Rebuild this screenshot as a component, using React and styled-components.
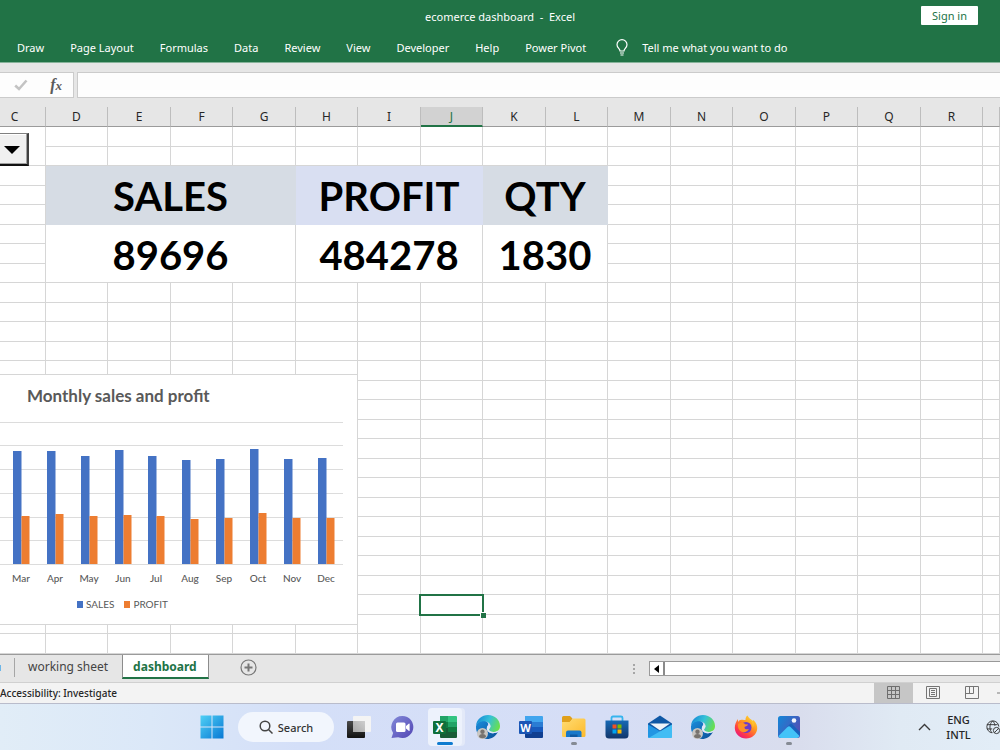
import React from "react";
import styled, { createGlobalStyle, css } from "styled-components";

const GlobalStyle = createGlobalStyle`
  *, *::before, *::after {
    box-sizing: border-box;
  }
  body {
    margin: 0;
    overflow-x: hidden;
    background: #e6e6e6;
    font-family: "Noto Sans", "Open Sans", sans-serif;
    font-size: 11px;
    color: #262626;
  }
  button, input, select {
    margin: 0;
    padding: 0;
    border: 0;
    background: none;
    color: inherit;
    font: inherit;
  }
`;

const Page = styled.div`
  display: flex;
  flex-direction: column;
  min-height: 100vh;
  overflow: hidden;
`;

/* ---------- title bar and ribbon ---------- */

const Header = styled.header`
  background: #217346;
  border-bottom: 1px solid #86b39a;
  color: #fff;
`;

const TitleBar = styled.div`
  display: grid;
  grid-template-columns: 1fr auto 1fr;
  align-items: center;
  height: 34px;
  padding: 0 22px 2px;
`;

const Title = styled.h1`
  grid-column: 2;
  margin: 0;
  font-size: 11px;
  font-weight: 400;
  white-space: pre;
`;

const SignIn = styled.button`
  justify-self: end;
  align-self: start;
  width: 57px;
  height: 19px;
  margin-top: 6px;
  border-radius: 1px;
  background: #fff;
  color: #217346;
  line-height: 19px;
`;

const Ribbon = styled.nav`
  display: flex;
  align-items: center;
  gap: 26px;
  height: 28px;
  padding: 0 0 2px 17px;
  white-space: nowrap;
`;

const TellMe = styled.button`
  display: flex;
  align-items: center;
  gap: 14px;
  margin-left: 4px;
`;

/* ---------- formula bar ---------- */

const FormulaBar = styled.div`
  display: flex;
  gap: 3px;
  padding: 9px 0;
  background: #e6e6e6;
`;

const FormulaTools = styled.div`
  display: flex;
  align-items: center;
  justify-content: flex-end;
  gap: 22px;
  width: 74px;
  height: 26px;
  padding-right: 11px;
  border: 1px solid #cbcbcb;
  border-left: 0;
  background: #fdfdfd;
`;

const ToolButton = styled.button`
  display: flex;
`;

const Fx = styled.button`
  color: #5a5a5a;
  font-family: "Liberation Serif", serif;
  font-size: 16px;
  font-style: italic;
  font-weight: 700;
  line-height: 20px;

  span {
    font-size: 13px;
  }
`;

const FormulaInput = styled.input`
  flex: 1;
  min-width: 0;
  height: 26px;
  padding: 0 6px;
  border: 1px solid #cbcbcb;
  border-right: 0;
  background: #fdfdfd;
`;

/* ---------- sheet ---------- */

const Sheet = styled.main`
  position: relative;
  background: #fff;
  border-bottom: 1px solid #9b9b9b;
`;

const Grid = styled.table`
  width: 100%;
  table-layout: fixed;
  border-collapse: separate;
  border-spacing: 0;
`;

const Col = styled.col`
  width: ${(props) => props.$width};
`;

const ColumnHead = styled.th`
  height: 20px;
  padding: 0 ${(props) => (props.$clipped ? "16px" : "0")} 0 0;
  border-right: 1px solid #bdbdbd;
  border-bottom: 1px solid #9b9b9b;
  background: #e6e6e6;
  font-size: 12px;
  font-weight: 400;
  line-height: 18px;

  ${(props) =>
    props.$active &&
    css`
      border-bottom: 2px solid #217346;
      background: #d2d2d2;
      color: #217346;
      line-height: 17px;
    `}
`;

const Row = styled.tr`
  height: ${(props) => (props.$tall ? "20px" : "19px")};
`;

const Cell = styled.td`
  padding: 0;
  border-right: 1px solid #d6d6d6;
  border-bottom: 1px solid #d6d6d6;

  ${(props) =>
    props.$selected &&
    css`
      position: relative;

      &::before {
        content: "";
        position: absolute;
        inset: -1px -2px -2px -2px;
        border: 2px solid #217346;
      }

      &::after {
        content: "";
        position: absolute;
        right: -4px;
        bottom: -4px;
        width: 6px;
        height: 6px;
        border: 1px solid #fff;
        border-right: 0;
        border-bottom: 0;
        background: #217346;
      }
    `}
`;

const Kpi = styled(Cell)`
  padding-top: 2px;
  background: ${(props) => props.$fill || "#fff"};
  border-bottom-color: ${(props) => props.$fill || "#d6d6d6"};
  border-right-color: ${(props) => props.$fill || "#d6d6d6"};
  color: #000;
  font-family: Lato, "Open Sans", sans-serif;
  font-size: 40px;
  font-weight: 700;
  line-height: 50px;
  text-align: center;
`;

const Filter = styled.div`
  position: absolute;
  top: 26px;
  left: 0;
  width: 29px;
  height: 33px;

  select {
    width: 100%;
    height: 100%;
    appearance: none;
    border: solid;
    border-width: 1px 2px 2px 0;
    border-color: #808080 #404040 #111 #111;
    background: #f0f0f0;
    box-shadow: inset -1px -1px #a0a0a0, inset 0 1px #fff;
  }

  svg {
    position: absolute;
    top: 13px;
    left: 4px;
    pointer-events: none;
  }
`;

/* ---------- chart ---------- */

const ChartCard = styled.section`
  position: absolute;
  top: 267px;
  left: 0;
  width: 358px;
  height: 251px;
  border: 1px solid #d6d6d6;
  border-left: 0;
  background: #fff;
  color: #595959;
  font-family: Lato, "Open Sans", sans-serif;
`;

const ChartTitle = styled.h2`
  margin: 0;
  padding: 10px 0 0 27px;
  font-size: 17px;
  font-weight: 700;
  line-height: 22px;
`;

const Plot = styled.svg`
  display: block;
  margin-top: 10px;

  text {
    fill: #595959;
    font-size: 10px;
    font-weight: 500;
    text-anchor: middle;
  }
`;

const Legend = styled.div`
  display: flex;
  gap: 10px;
  padding: 7px 0 0 77px;
  font-size: 10px;
  line-height: 14px;
`;

const LegendItem = styled.span`
  display: flex;
  align-items: center;
  gap: 3px;

  &::before {
    content: "";
    width: 6px;
    height: 7px;
    background: ${(props) => props.$color};
  }
`;

/* ---------- sheet tabs and status bar ---------- */

const TabBar = styled.div`
  display: flex;
  align-items: flex-start;
  height: 28px;
  background: #e6e6e6;
  border-bottom: 1px solid #d0d0d0;
`;

const CutTab = styled.button`
  width: 15px;
  height: 19px;
  margin-top: 3px;
  border-right: 1px solid #a6a6a6;
  overflow: hidden;

  &::before {
    content: "";
    display: block;
    width: 1px;
    height: 6px;
    background: #6db6e8;
  }
`;

const SheetTab = styled.button`
  height: 24px;
  padding: 0 14px 0 13px;
  color: #444;
  font-size: 12px;
  line-height: 24px;

  ${(props) =>
    props.$active &&
    css`
      padding: 0 11px 0 10px;
      border-right: 1px solid #8c8c8c;
      border-bottom: 2px solid #217346;
      border-left: 1px solid #8c8c8c;
      background: #fff;
      color: #217346;
      font-weight: 700;
    `}
`;

const AddSheet = styled.button`
  display: flex;
  margin: 4px 0 0 31px;
`;

const ScrollArea = styled.div`
  display: flex;
  flex: 0 0 367px;
  align-items: center;
  gap: 13px;
  height: 27px;
  margin-left: auto;
`;

const Scroller = styled.div`
  display: flex;
  flex: 1;
  height: 15px;
  border: 1px solid #999;
  border-right: 0;
  background: #fff;
`;

const ScrollLeft = styled.button`
  display: flex;
  align-items: center;
  justify-content: center;
  width: 15px;
  border-right: 2px solid #8a8a8a;
`;

const StatusBar = styled.footer`
  display: flex;
  align-items: stretch;
  justify-content: space-between;
  height: 20px;
  background: #f3f3f3;
  font-size: 10px;
  font-weight: 500;
  line-height: 20px;
`;

const ViewButtons = styled.div`
  display: flex;
`;

const ViewButton = styled.button`
  display: flex;
  align-items: center;
  justify-content: center;
  width: 39px;
  background: ${(props) => (props.$active ? "#c6c6c6" : "transparent")};
`;

const ZoomOut = styled.button`
  display: flex;
  align-items: center;
  width: 9px;
  padding-left: 6px;
  overflow: hidden;
`;

/* ---------- taskbar ---------- */

const Taskbar = styled.div`
  display: grid;
  flex: 1 0 auto;
  grid-template-columns: 1fr auto 1fr;
  height: 47px;
  border-top: 1px solid #b9bccb;
  background: linear-gradient(
    90deg,
    #e1edf7 0%,
    #dbe8f8 15%,
    #d4dff8 30%,
    #d6def6 60%,
    #d9dded 80%,
    #e0eaf4 90%,
    #e2edf7 100%
  );
`;

const Apps = styled.div`
  display: flex;
  grid-column: 2;
  align-items: center;
`;

const AppButton = styled.button`
  position: relative;
  display: flex;
  align-items: center;
  justify-content: center;
  width: 43px;
  height: 46px;

  ${(props) =>
    props.$state &&
    css`
      &::after {
        content: "";
        position: absolute;
        bottom: 5px;
        left: ${props.$state === "active" ? "14px" : "19px"};
        width: ${props.$state === "active" ? "16px" : "6px"};
        height: 3px;
        border-radius: 2px;
        background: ${props.$state === "active" ? "#0f7bd0" : "#858b94"};
      }
    `}
`;

const Tile = styled.span`
  display: flex;
  align-items: center;
  justify-content: center;
  width: 34px;
  height: 38px;
  border-radius: 4px;
  background: ${(props) => (props.$active ? "#edf2fc" : "transparent")};
  box-shadow: ${(props) => (props.$active ? "3px 0 0 #e3e9f8" : "none")};
`;

const SearchPill = styled.button`
  display: flex;
  align-items: center;
  justify-content: center;
  gap: 5px;
  width: 96px;
  height: 30px;
  margin: 0 3px 0 5px;
  border-radius: 15px;
  background: #f2f6fd;
  color: #333;
  font-weight: 500;
`;

const Tray = styled.div`
  display: flex;
  align-items: center;
  justify-content: flex-end;
  gap: 15px;
  overflow: hidden;
`;

const TrayButton = styled.button`
  display: flex;
  justify-content: flex-start;
  width: ${(props) => props.$width};
  overflow: hidden;
`;

const Language = styled.button`
  width: 25px;
  font-weight: 500;
  line-height: 15px;
  text-align: center;
`;

/* ---------- icons ---------- */

const BulbIcon = () => (
  <svg width="12" height="17" viewBox="0 0 12 17" fill="none" stroke="#fff" strokeWidth="1.200">
    <path d="M4 12C4 9.800 1 8.900 1 5.700a5 5 0 0 1 10 0C11 8.900 8 9.800 8 12z" />
    <path d="M4 14h4M4.500 16h3" />
  </svg>
);

const CheckIcon = () => (
  <svg width="14" height="12" viewBox="0 0 14 12" fill="none" stroke="#c3c3c3" strokeWidth="2.600">
    <path d="M1.200 6.500 5 10l7.500-8.500" />
  </svg>
);

const PlusIcon = () => (
  <svg width="17" height="17" viewBox="0 0 17 17" fill="none" stroke="#777">
    <circle cx="8.500" cy="8.500" r="7.500" strokeWidth="1.200" />
    <path d="M4.500 8.500h8M8.500 4.500v8" strokeWidth="2" />
  </svg>
);

const DotsIcon = () => (
  <svg width="3" height="12" viewBox="0 0 3 12" fill="#a6a6a6">
    <path d="M0 1h2v2H0zM0 5h2v2H0zM0 9h2v2H0z" />
  </svg>
);

const NormalViewIcon = () => (
  <svg width="14" height="14" viewBox="0 0 14 14" fill="none" stroke="#6e6e6e">
    <path d="M.5.5h12v12H.5zM.5 4.500h12M.5 8.500h12M4.500.5v12M8.500.5v12" />
  </svg>
);

const PageViewIcon = () => (
  <svg width="14" height="14" viewBox="0 0 14 14" fill="none" stroke="#757575">
    <path d="M.5.5h13v12H.5zM3.500 2.500h7v8h-7zM5 4.500h4M5 6.500h4M5 8.500h4" />
  </svg>
);

const BreakViewIcon = () => (
  <svg width="14" height="14" viewBox="0 0 14 14" fill="none" stroke="#757575">
    <path d="M.5.5h13v12H.5zM.5 7.500h8v-7M4.500.5v7" />
  </svg>
);

const WindowsIcon = () => (
  <svg width="24" height="24" viewBox="0 0 24 24">
    <defs>
      <linearGradient id="win" x1="0" y1="0" x2="1" y2="1">
        <stop offset="0" stopColor="#4fd0f5" />
        <stop offset="1" stopColor="#0878d4" />
      </linearGradient>
    </defs>
    <path fill="url(#win)" d="M.5.5h11v11H.5zM12.500.5h11v11h-11zM.5 12.500h11v11H.5zM12.500 12.500h11v11h-11z" />
  </svg>
);

const SearchIcon = () => (
  <svg width="14" height="14" viewBox="0 0 14 14" fill="none" stroke="#444" strokeWidth="1.500">
    <circle cx="6" cy="6" r="4.800" />
    <path d="m9.500 9.500 4 4" />
  </svg>
);

const TaskViewIcon = () => (
  <svg width="24" height="24" viewBox="0 0 24 24">
    <defs>
      <linearGradient id="tvBack" x1="0" y1="0" x2="0" y2="1">
        <stop offset="0" stopColor="#4a4a4a" />
        <stop offset="1" stopColor="#121212" />
      </linearGradient>
      <linearGradient id="tvFront" x1="0" y1="1" x2="1" y2="0">
        <stop offset="0" stopColor="#a8a8a8" />
        <stop offset="1" stopColor="#cfcfcf" />
      </linearGradient>
    </defs>
    <rect x="0" y="6" width="18" height="17" rx="1" fill="url(#tvBack)" />
    <rect x="6" y="1" width="18" height="16" rx="1" fill="#f4f4f4" />
    <rect x="6" y="6" width="12" height="11" fill="url(#tvFront)" />
  </svg>
);

const ChatIcon = () => (
  <svg width="24" height="24" viewBox="0 0 24 24">
    <defs>
      <linearGradient id="chat" x1="0" y1="0" x2="1" y2="1">
        <stop offset="0" stopColor="#8289d8" />
        <stop offset="1" stopColor="#5346b4" />
      </linearGradient>
    </defs>
    <path fill="url(#chat)" d="M12.500 1a11 11 0 1 1-4.300 21.200L1.500 23l1.600-5A11 11 0 0 1 12.500 1z" />
    <rect x="6" y="7.500" width="9.500" height="9.500" rx="1.500" fill="#fff" />
    <path fill="#fff" d="m16 11 3-2.500q.6-.3.600.4v6.700q0 .7-.6.300L16 13.500z" />
  </svg>
);

const ExcelIcon = () => (
  <svg width="24" height="24" viewBox="0 0 24 24">
    <path fill="#21a366" d="M7 1h9v6H7z" />
    <path fill="#33c481" d="M15 1h8q1 0 1 1v5h-9z" />
    <path fill="#185c37" d="M7 12h9v11H8q-1 0-1-1z" />
    <path fill="#107c41" d="M7 7h8v6H7zM15 12h9v5h-9z" />
    <path fill="#21a366" d="M15 7h9v5h-9z" />
    <path fill="#185c37" d="M15 17h9v5q0 1-1 1h-8z" />
    <rect x="0" y="6" width="13" height="13" rx="1" fill="#0f6f3b" />
    <text x="6.500" y="16.500" fill="#fff" fontSize="12" fontWeight="700" textAnchor="middle">X</text>
  </svg>
);

const WordIcon = () => (
  <svg width="24" height="24" viewBox="0 0 24 24">
    <path fill="#41a5ee" d="M6 1h17q1 0 1 1v5H6z" />
    <path fill="#2b7cd3" d="M6 7h18v5H6z" />
    <path fill="#185abd" d="M6 12h18v5H6z" />
    <path fill="#103f91" d="M6 17h18v5q0 1-1 1H7q-1 0-1-1z" />
    <rect x="0" y="6" width="13" height="13" rx="1" fill="#1b56b5" />
    <text x="6.500" y="16.500" fill="#fff" fontSize="11" fontWeight="700" textAnchor="middle">W</text>
  </svg>
);

const EdgeIcon = ({ id }) => (
  <svg width="26" height="26" viewBox="0 0 26 26">
    <defs>
      <linearGradient id={`${id}Top`} x1="0" y1=".3" x2="1" y2=".6">
        <stop offset="0" stopColor="#1689d6" />
        <stop offset=".5" stopColor="#35c1d8" />
        <stop offset="1" stopColor="#6be04a" />
      </linearGradient>
      <linearGradient id={`${id}Low`} x1="0" y1="0" x2="1" y2="1">
        <stop offset="0" stopColor="#1b8ddc" />
        <stop offset="1" stopColor="#0b4f96" />
      </linearGradient>
    </defs>
    <path fill={`url(#${id}Low)`} d="M1 12c1-4 5-6 9-5 3 .8 4 3 2.500 5-1.500 2.500-.5 6 3.500 7 3 .6 5-.2 7-1-2.500 4.500-6.500 7-11 7C5 24.500.500 19 1 12z" />
    <path fill={`url(#${id}Top)`} d="M1 12C1.500 5 7 1 13 1c7 0 12 5 12 11 0 4-3 6-6.500 6-3 0-4.500-1-4.500-2.500 0-1 1.500-1.500 1.500-3.500 0-2.500-2.800-4.700-6.500-4.700-4 0-7 2.200-8 4.700z" />
    <path fill="#dfe7f7" d="M12.500 12c1-1 2.700-.8 3 0 0 2-1.500 2.500-1.500 3.500 0 1.500 1.500 2.500 4.500 2.500 1.500 0 3-.4 4.200-1.200L23 18c-2 .8-4 1.600-7 1-4-1-5-4.500-3.500-7z" />
    <circle cx="7.500" cy="19.500" r="5.500" fill="#c9c6c2" />
    <circle cx="7.500" cy="17.800" r="2.200" fill="#77736f" />
    <path fill="#77736f" d="M4 23q0-3 3.500-3t3.500 3q-3.500 2.500-7 0z" />
  </svg>
);

const FolderIcon = () => (
  <svg width="25" height="24" viewBox="0 0 25 24">
    <defs>
      <linearGradient id="folder" x1="0" y1="0" x2="1" y2="1">
        <stop offset="0" stopColor="#ffdc73" />
        <stop offset="1" stopColor="#fdb92a" />
      </linearGradient>
    </defs>
    <path fill="#e0a01b" d="M1 2.500Q1 1 2.500 1H9l2.500 2.500-2.500 4H1z" />
    <path fill="url(#folder)" d="M1 7h7.500L12 3.500h11q1.500 0 1.500 1.500v15.500q0 1.500-1.500 1.500H2.500Q1 22 1 20.500z" />
    <path fill="#1878c9" d="M5 22v-4.500Q5 15.500 7 15.500h11.500q2 0 2 2V22z" />
    <path fill="#0f59a1" d="M9 22v-2.500h7.500V22z" />
  </svg>
);

const StoreIcon = () => (
  <svg width="24" height="24" viewBox="0 0 24 24">
    <defs>
      <linearGradient id="store" x1="0" y1="0" x2="0" y2="1">
        <stop offset="0" stopColor="#1769b5" />
        <stop offset="1" stopColor="#12366b" />
      </linearGradient>
    </defs>
    <path fill="none" stroke="#36b4ee" strokeWidth="1.800" d="M6.500 7V3q0-1.500 1.500-1.500h8q1.500 0 1.500 1.500v4" />
    <path fill="url(#store)" d="M.5 5.500h23v14.500q0 3.500-3.500 3.500H4Q.5 23.500.5 20z" />
    <path fill="#f25022" d="M7.500 9.500h4v4h-4z" />
    <path fill="#7fba00" d="M12.500 9.500h4v4h-4z" />
    <path fill="#00a4ef" d="M7.500 14.500h4v4h-4z" />
    <path fill="#ffb900" d="M12.500 14.500h4v4h-4z" />
  </svg>
);

const MailIcon = () => (
  <svg width="26" height="24" viewBox="0 0 26 24">
    <path fill="#0f58a5" d="M1 8.500 13 .500l12 8V20H1z" />
    <path fill="#eef3f8" d="M3 8.500h20l-10 7z" />
    <path fill="#2196e3" d="M1 9.500 25 23H2q-1 0-1-1z" />
    <path fill="#42bdf4" d="M25 9.500 1.500 23H24q1 0 1-1z" />
  </svg>
);

const FirefoxIcon = () => (
  <svg width="24" height="24" viewBox="0 0 24 24">
    <defs>
      <linearGradient id="fox" x1=".9" y1="0" x2=".2" y2="1">
        <stop offset="0" stopColor="#ffe53b" />
        <stop offset=".4" stopColor="#ff9a1f" />
        <stop offset=".75" stopColor="#ff3b47" />
        <stop offset="1" stopColor="#e31587" />
      </linearGradient>
    </defs>
    <path fill="url(#fox)" d="M13.500.5c1 3 4 3.500 5 6l1-1.500c3 3 4 6 3.700 9C22.600 19.500 18 23.500 12 23.500S1 19 .8 13C.7 9.500 2 6.500 4 4v3c1-1.500 2-2 3.500-2.200 1.500-.2 3 .2 4 .2 0-2 .5-3.500 2-4.500z" />
    <circle cx="12" cy="12.500" r="5.500" fill="#6b3ccb" />
    <path fill="#ff9125" d="M4 9c3-2 6-1.500 7 .2l3 .3c-.5 2-3.500 1.500-3.500 3 0 1.800 2.500 2.300 4.500 1.500-1.500 3-5 4-8 2.500C4.500 15 3.500 12 4 9z" />
    <path fill="#ffc52c" d="M14.500 4c3 2 5 5 4 9 2-3 1.500-6-.5-8z" />
  </svg>
);

const PhotosIcon = () => (
  <svg width="24" height="24" viewBox="0 0 24 24">
    <defs>
      <linearGradient id="photo" x1="0" y1="0" x2="1" y2=".6">
        <stop offset="0" stopColor="#1287d8" />
        <stop offset="1" stopColor="#5350b5" />
      </linearGradient>
    </defs>
    <rect x="1" y="1" width="22" height="22" rx="2.500" fill="url(#photo)" />
    <path fill="#1a62bd" d="m10 12 3-3q1-1 2 0l8 8v4z" />
    <path fill="#43c3f8" d="M1.500 21 10.500 12q1.500-1.500 3 0l9 9q-1 2-2.500 2H4q-2 0-2.500-2z" />
    <circle cx="17" cy="5.500" r="2.300" fill="#f2f5fb" />
  </svg>
);

const ChevronIcon = () => (
  <svg width="13" height="8" viewBox="0 0 13 8" fill="none" stroke="#3a3a3a" strokeWidth="1.400">
    <path d="m1 7 5.500-5.500L12 7" />
  </svg>
);

const GlobeIcon = () => (
  <svg width="18" height="18" viewBox="0 0 18 18" fill="none" stroke="#333" strokeWidth="1.200">
    <path d="M8 16.500a7.700 7.700 0 1 1 8.500-8M1.200 6H15M1.200 11.500H8M8 16.500C4 13 4 5 8.500 1.200c2 2 3 4 3 6.300" />
    <circle cx="13.500" cy="13.500" r="4" />
    <path d="m10.700 16.300 5.600-5.600" />
  </svg>
);

/* ---------- data ---------- */

const ribbonTabs = [
  "Draw",
  "Page Layout",
  "Formulas",
  "Data",
  "Review",
  "View",
  "Developer",
  "Help",
  "Power Pivot",
];

const columns = "CDEFGHIJKLMNOPQR".split("");
const ROWS = 27;

const kpis = [
  { label: "SALES", value: "89696", span: 4, fill: "#d6dce4" },
  { label: "PROFIT", value: "484278", span: 3, fill: "#d9dff2" },
  { label: "QTY", value: "1830", span: 2, fill: "#d6dce4" },
];

// bar heights in plot units
const months = [
  { name: "Mar", sales: 113, profit: 48 },
  { name: "Apr", sales: 113, profit: 50 },
  { name: "May", sales: 108, profit: 48 },
  { name: "Jun", sales: 114, profit: 49 },
  { name: "Jul", sales: 108, profit: 48 },
  { name: "Aug", sales: 104, profit: 45 },
  { name: "Sep", sales: 105, profit: 46 },
  { name: "Oct", sales: 115, profit: 51 },
  { name: "Nov", sales: 105, profit: 46 },
  { name: "Dec", sales: 106, profit: 46 },
];

const apps = [
  { name: "Task view", icon: <TaskViewIcon /> },
  { name: "Chat", icon: <ChatIcon /> },
  { name: "Excel", icon: <ExcelIcon />, state: "active" },
  { name: "Edge", icon: <EdgeIcon id="edgeA" /> },
  { name: "Word", icon: <WordIcon /> },
  { name: "File Explorer", icon: <FolderIcon />, state: "open" },
  { name: "Store", icon: <StoreIcon /> },
  { name: "Mail", icon: <MailIcon /> },
  { name: "Edge profile", icon: <EdgeIcon id="edgeB" /> },
  { name: "Firefox", icon: <FirefoxIcon /> },
  { name: "Photos", icon: <PhotosIcon />, state: "open" },
];

/* ---------- parts ---------- */

const MonthlyChart = () => (
  <ChartCard>
    <ChartTitle>Monthly sales and profit</ChartTitle>
    <Plot width="343" height="173" viewBox="0 0 343 173">
      {[5, 28, 52, 76, 100, 123, 147].map((y) => (
        <path key={y} d={`M0 ${y + 0.5}h343`} stroke="#dcdcdc" />
      ))}
      {months.map((month, i) => {
        const x = 13 + Math.round(i * 33.85);
        return (
          <g key={month.name}>
            <rect x={x} y={147 - month.sales} width="8.500" height={month.sales} fill="#4472c4" />
            <rect x={x + 8.5} y={147 - month.profit} width="8" height={month.profit} fill="#ed7d31" />
            <text x={x + 8} y="165">
              {month.name}
            </text>
          </g>
        );
      })}
    </Plot>
    <Legend>
      <LegendItem $color="#4472c4">SALES</LegendItem>
      <LegendItem $color="#ed7d31">PROFIT</LegendItem>
    </Legend>
  </ChartCard>
);

const cellsFor = (row) => {
  // rows 2-4 hold the merged captions, rows 5-7 the merged figures
  const merged = row >= 2 && row <= 7;
  const cells = [];
  columns.forEach((letter, i) => {
    if (letter === "C" && row < 2) {
      if (row === 0) cells.push(<Cell key={letter} rowSpan={2} />);
      return;
    }
    if (merged && i >= 1 && i <= 9) {
      if (i === 1 && (row === 2 || row === 5)) {
        kpis.forEach((kpi) =>
          cells.push(
            <Kpi key={kpi.label} colSpan={kpi.span} rowSpan={3} $fill={row === 2 ? kpi.fill : null}>
              {row === 2 ? kpi.label : kpi.value}
            </Kpi>
          )
        );
      }
      return;
    }
    cells.push(<Cell key={letter} $selected={letter === "J" && row === 24} />);
  });
  cells.push(<Cell key="S" />);
  return cells;
};

const SheetGrid = () => (
  <Grid>
    <colgroup>
      <Col $width="46px" />
      {columns.slice(1).map((letter, i) => (
        <Col key={letter} $width={i % 2 ? "63px" : "62px"} />
      ))}
      <Col $width="auto" />
    </colgroup>
    <thead>
      <tr>
        {columns.map((letter) => (
          <ColumnHead key={letter} $clipped={letter === "C"} $active={letter === "J"}>
            {letter}
          </ColumnHead>
        ))}
        <ColumnHead />
      </tr>
    </thead>
    <tbody>
      {Array.from({ length: ROWS }, (_, row) => (
        <Row key={row} $tall={row % 2 === 0}>
          {cellsFor(row)}
        </Row>
      ))}
    </tbody>
  </Grid>
);

const App = () => {
  return (
    <Page>
      <GlobalStyle />
      <Header>
        <TitleBar>
          <Title>{"ecomerce dashboard  -  Excel"}</Title>
          <SignIn>Sign in</SignIn>
        </TitleBar>
        <Ribbon>
          {ribbonTabs.map((tab) => (
            <button key={tab}>{tab}</button>
          ))}
          <TellMe>
            <BulbIcon />
            Tell me what you want to do
          </TellMe>
        </Ribbon>
      </Header>

      <FormulaBar>
        <FormulaTools>
          <ToolButton aria-label="Enter">
            <CheckIcon />
          </ToolButton>
          <Fx aria-label="Insert function">
            f<span>x</span>
          </Fx>
        </FormulaTools>
        <FormulaInput aria-label="Formula bar" />
      </FormulaBar>

      <Sheet>
        <SheetGrid />
        <Filter>
          <select aria-label="Filter" />
          <svg width="16" height="8" viewBox="0 0 16 8">
            <path d="M0 0h16L8 8z" />
          </svg>
        </Filter>
        <MonthlyChart />
      </Sheet>

      <TabBar>
        <CutTab aria-label="Previous sheet" />
        <SheetTab>working sheet</SheetTab>
        <SheetTab $active>dashboard</SheetTab>
        <AddSheet aria-label="New sheet">
          <PlusIcon />
        </AddSheet>
        <ScrollArea>
          <DotsIcon />
          <Scroller>
            <ScrollLeft aria-label="Scroll left">
              <svg width="5" height="8" viewBox="0 0 5 8">
                <path d="M5 0v8L0 4z" />
              </svg>
            </ScrollLeft>
          </Scroller>
        </ScrollArea>
      </TabBar>

      <StatusBar>
        <span>Accessibility: Investigate</span>
        <ViewButtons>
          <ViewButton $active aria-label="Normal">
            <NormalViewIcon />
          </ViewButton>
          <ViewButton aria-label="Page layout">
            <PageViewIcon />
          </ViewButton>
          <ViewButton aria-label="Page break preview">
            <BreakViewIcon />
          </ViewButton>
          <ZoomOut aria-label="Zoom out">
            <svg width="8" height="2" viewBox="0 0 8 2">
              <path fill="#555" d="M0 0h8v2H0z" />
            </svg>
          </ZoomOut>
        </ViewButtons>
      </StatusBar>

      <Taskbar>
        <Apps>
          <AppButton aria-label="Start">
            <WindowsIcon />
          </AppButton>
          <SearchPill>
            <SearchIcon />
            Search
          </SearchPill>
          {apps.map((app) => (
            <AppButton key={app.name} aria-label={app.name} $state={app.state}>
              <Tile $active={app.state === "active"}>{app.icon}</Tile>
            </AppButton>
          ))}
        </Apps>
        <Tray>
          <TrayButton aria-label="Show hidden icons" $width="13px">
            <ChevronIcon />
          </TrayButton>
          <Language>ENG INTL</Language>
          <TrayButton aria-label="Network" $width="14px">
            <GlobeIcon />
          </TrayButton>
        </Tray>
      </Taskbar>
    </Page>
  );
};

export default App;
